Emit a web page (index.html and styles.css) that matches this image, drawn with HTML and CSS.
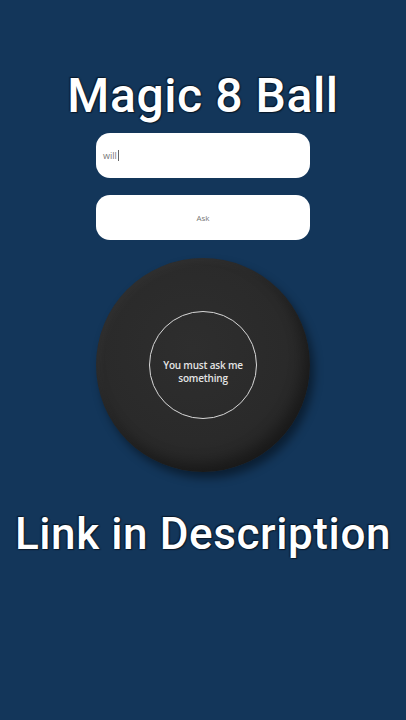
FILE: index.html
```html
<!DOCTYPE html>
<html>
<head>
<meta charset="utf-8">
<link rel="stylesheet" href="styles.css">
</head>
<body>
<div class="page">
  <h1 class="title">Magic 8 Ball</h1>
  <div class="field"><span class="typed">will</span><span class="caret"></span></div>
  <div class="button">Ask</div>
  <div class="ball">
    <div class="window">
      <p class="answer">You must ask me<br>something</p>
    </div>
  </div>
  <h2 class="footer">Link in Description</h2>
</div>
</body>
</html>
```
FILE: styles.css
```css
html, body {
  margin: 0;
  padding: 0;
  background: #13365a;
}
.page {
  width: 406px;
  height: 720px;
  display: flex;
  flex-direction: column;
  align-items: center;
  font-family: Roboto, "Liberation Sans", sans-serif;
  box-sizing: border-box;
  padding-top: 68px;
}
.title {
  margin: 0;
  color: #ffffff;
  font-weight: 500;
  font-size: 48px;
  line-height: 56px;
  letter-spacing: 0.6px;
  text-shadow: 0 0 2px #0a1a2a, 1px 1px 1px #0a1a2a, -1px -1px 1px #0a1a2a;
}
.field {
  margin-top: 9px;
  width: 214px;
  height: 45px;
  background: #ffffff;
  border-radius: 14px;
  display: flex;
  align-items: center;
  padding-left: 7px;
  box-sizing: border-box;
  font-family: "Open Sans", sans-serif;
  font-size: 9px;
  color: #777;
}
.caret {
  width: 1px;
  height: 11px;
  background: #666;
  margin-left: 1px;
}
.button {
  margin-top: 17px;
  width: 214px;
  height: 45px;
  background: #ffffff;
  border-radius: 14px;
  display: flex;
  align-items: center;
  justify-content: center;
  font-family: "Open Sans", sans-serif;
  font-size: 8px;
  color: #777;
}
.ball {
  margin-top: 18px;
  width: 214px;
  height: 214px;
  border-radius: 50%;
  background: radial-gradient(circle at 45% 42%, #2e2e2e 0%, #2a2a2a 55%, #202020 100%);
  box-shadow: 4px 6px 10px rgba(0,0,0,0.45), inset -6px -8px 14px rgba(0,0,0,0.35), inset 4px 4px 10px rgba(255,255,255,0.03);
  display: flex;
  align-items: center;
  justify-content: center;
}
.window {
  width: 108px;
  height: 108px;
  border-radius: 50%;
  border: 1.2px solid #d8d8d8;
  box-sizing: border-box;
  display: flex;
  align-items: center;
  justify-content: center;
  padding-top: 14px;
}
.answer {
  margin: 0;
  text-align: center;
  font-family: "Open Sans", sans-serif;
  font-weight: 600;
  font-size: 10px;
  line-height: 13px;
  letter-spacing: -0.2px;
  color: #e4e4e4;
}
.footer {
  margin: 36px 0 0 0;
  color: #ffffff;
  font-weight: 500;
  font-size: 44px;
  line-height: 52px;
  letter-spacing: 0.6px;
  text-shadow: 0 0 2px #0a1a2a, 1px 1px 1px #0a1a2a, -1px -1px 1px #0a1a2a;
}
```
